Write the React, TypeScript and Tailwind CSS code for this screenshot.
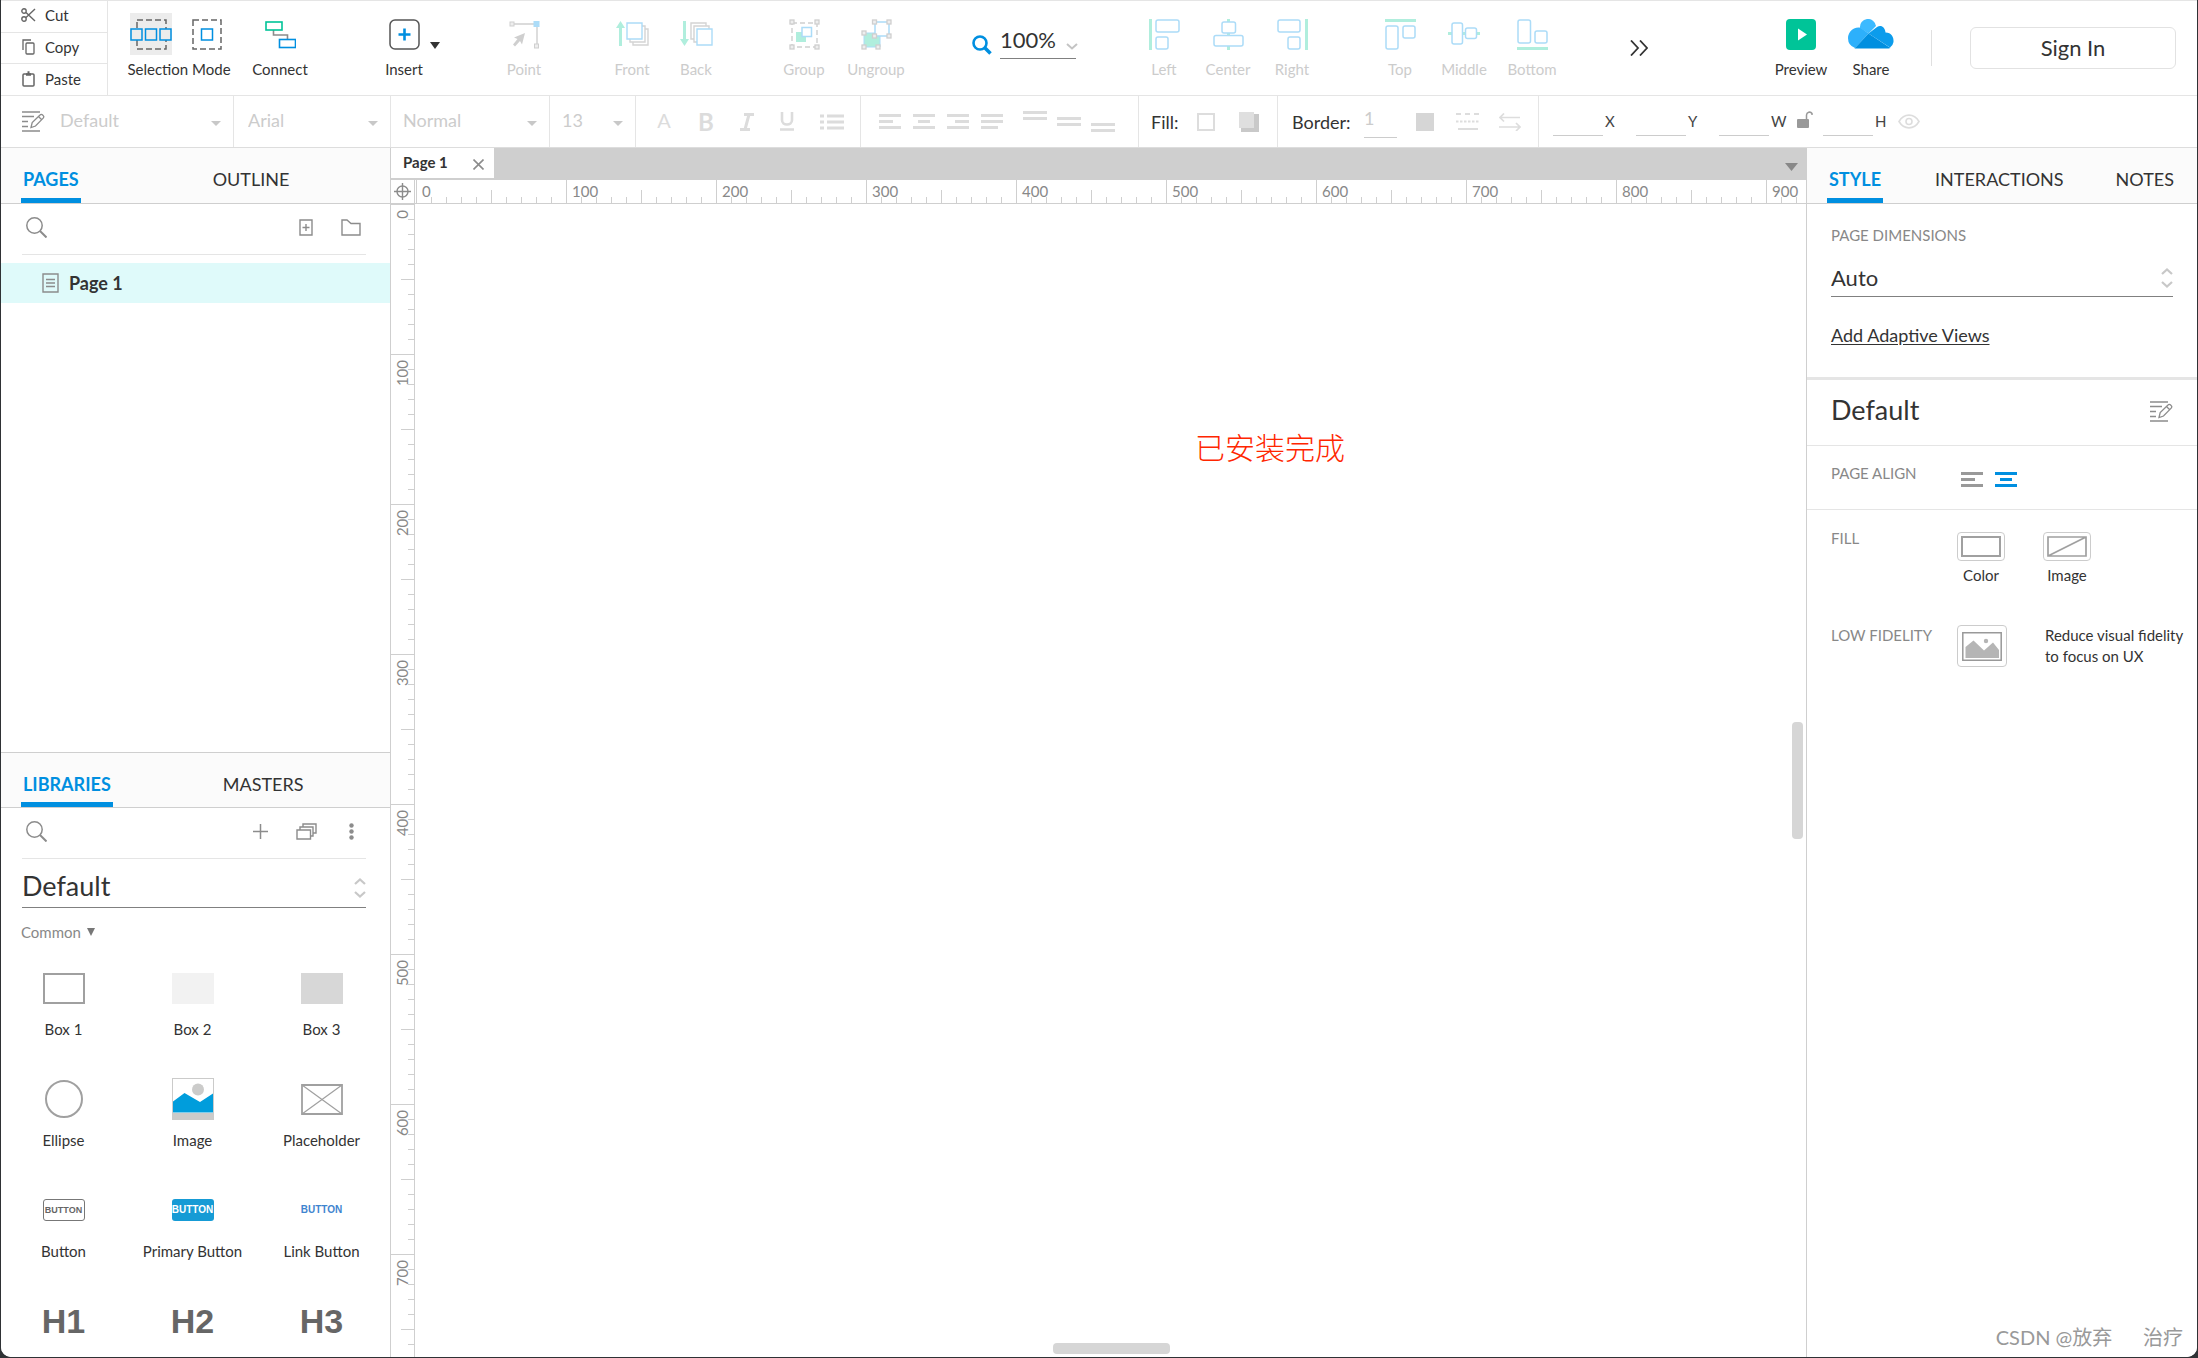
import type { ReactNode } from 'react'
import clsx from 'clsx'

const rulerX = [0, 100, 200, 300, 400, 500, 600, 700, 800, 900]
const rulerY = [0, 100, 200, 300, 400, 500, 600, 700]
const ticks = [1, 2, 3, 4, 5, 6, 7, 8, 9]

function Tool({
  label,
  children,
  disabled = false,
  wide = false,
}: {
  label: string
  children: ReactNode
  disabled?: boolean
  wide?: boolean
}) {
  return (
    <button
      disabled={disabled}
      className={clsx(
        'flex shrink-0 flex-col items-center pt-[18px] text-[15px] leading-5',
        wide ? 'w-[72px]' : 'w-16',
        disabled ? 'text-[#cccccc]' : 'text-[#333333]',
      )}
    >
      <span className="mb-2 flex h-8 items-start">{children}</span>
      {label}
    </button>
  )
}

function Caret({ className }: { className?: string }) {
  return (
    <svg width="10" height="5" viewBox="0 0 10 5" className={className} aria-hidden="true">
      <path d="M0 0h10L5 5z" fill="currentColor" />
    </svg>
  )
}

function UpDown() {
  return (
    <svg
      width="12"
      height="20"
      viewBox="0 0 12 20"
      fill="none"
      stroke="#c8c8c8"
      strokeWidth="2.200"
      className="pointer-events-none"
      aria-hidden="true"
    >
      <path d="M1 6l5-4.500L11 6M1 14l5 4.500L11 14" />
    </svg>
  )
}

function SearchIcon() {
  return (
    <svg width="21" height="21" viewBox="0 0 21 21" fill="none" stroke="#8c8c8c" strokeWidth="1.500" aria-hidden="true">
      <circle cx="8.500" cy="8.500" r="7.700" />
      <path d="M14 14l6.500 6.500" strokeWidth="2" />
    </svg>
  )
}

function StyleEditIcon() {
  return (
    <svg width="23" height="21" viewBox="0 0 23 21" fill="none" stroke="#8c8c8c" strokeWidth="1.300" aria-hidden="true">
      <path d="M0 1h18M0 5.500h12M0 10.500h6M0 15.500h6M0 20h18" />
      <path d="M9 16.500l1.200-5L18 4a1.800 1.800 0 0 1 2.600 0l.6.600a1.800 1.800 0 0 1 0 2.500L13.500 15zM16.500 5.500l3.200 3.200" />
    </svg>
  )
}

function HAlignIcon({ kind, className }: { kind: 'left' | 'center' | 'right' | 'justify'; className?: string }) {
  const mid = { left: 'M0 7.500h14', center: 'M5 7.500h12', right: 'M8 7.500h14', justify: 'M0 7.500h22' }[kind]
  const last = kind === 'justify' ? 'M0 13.500h17' : 'M0 13.500h22'
  return (
    <svg width="22" height="15" viewBox="0 0 22 15" stroke="currentColor" strokeWidth="3" className={className} aria-hidden="true">
      <path d="M0 1.500h22" />
      <path d={mid} />
      <path d={last} />
    </svg>
  )
}

function VAlignIcon() {
  return (
    <svg width="24" height="9" viewBox="0 0 24 9" stroke="currentColor" strokeWidth="3" aria-hidden="true">
      <path d="M0 1.500h24M0 7.500h24" />
    </svg>
  )
}

// corner handles shared by the group and ungroup drawings
function Handles({ points }: { points: [number, number][] }) {
  return (
    <>
      {points.map(([x, y]) => (
        <rect key={`${x}-${y}`} x={x} y={y} width="4" height="4" fill="#eeeeee" stroke="#cfcfcf" strokeWidth="1.300" />
      ))}
    </>
  )
}

function Tabs({ names, className }: { names: string[]; className: string }) {
  return (
    <div className={clsx('flex shrink-0 border-b border-[#cfcfcf] bg-[#fbfbfb] pl-5 text-[18px] leading-6', className)}>
      {names.map((name, i) => (
        <button
          key={name}
          className={clsx(
            'border-b-[5px] pt-3',
            i === 0 ? 'border-[#008fe0] px-0.5 font-bold text-[#008fe0]' : 'border-transparent text-[#333333]',
          )}
        >
          {name}
        </button>
      ))}
    </div>
  )
}

function ClipboardMenu() {
  const row = 'flex flex-1 items-center gap-[9px] pb-0.5 pl-5'
  return (
    <div className="flex w-[107px] shrink-0 flex-col divide-y divide-[#e5e5e5] border-r border-[#e5e5e5] text-[15px] leading-5 text-[#333333]">
      <button className={row}>
        <svg width="15" height="14" viewBox="0 0 15 14" fill="none" stroke="#666666" strokeWidth="1.400" aria-hidden="true">
          <circle cx="3" cy="3" r="2.200" />
          <circle cx="3" cy="11" r="2.200" />
          <path d="M5 4.500L14 13M5 9.500L14 1" />
        </svg>
        Cut
      </button>
      <button className={row}>
        <svg width="15" height="16" viewBox="0 0 15 16" fill="none" stroke="#666666" strokeWidth="1.300" aria-hidden="true">
          <path d="M2 11V1h8" />
          <rect x="5" y="4" width="8" height="11" rx="1" />
        </svg>
        Copy
      </button>
      <button className={row}>
        <svg width="15" height="16" viewBox="0 0 15 16" fill="none" stroke="#666666" strokeWidth="1.500" aria-hidden="true">
          <rect x="2" y="3" width="11" height="12" rx="1" />
          <path d="M5 3.500h5M6.500 1.500h2" strokeWidth="2.500" />
        </svg>
        Paste
      </button>
    </div>
  )
}

function MainToolbar() {
  return (
    <header className="flex h-24 shrink-0 border-y border-[#e5e5e5] bg-white">
      <ClipboardMenu />

      <div className="ml-5 flex w-[102px] shrink-0 flex-col items-center pt-3 text-[15px] leading-5 whitespace-nowrap text-[#333333]">
        <div className="mb-1 flex w-full justify-between pr-2 pl-0.5">
          <button aria-label="Select intersected" className="flex h-[42px] w-[42px] justify-center bg-[#ececec] pt-1.5">
            <svg width="42" height="31" viewBox="0 0 42 31" fill="none" aria-hidden="true">
              <rect x="7" y="1" width="29" height="29" stroke="#666666" strokeWidth="1.500" strokeDasharray="6 3" />
              <g fill="#ececec" stroke="#008fe0" strokeWidth="1.500">
                <rect x="1" y="10" width="11" height="11" />
                <rect x="15.500" y="10" width="11" height="11" />
                <rect x="30" y="10" width="11" height="11" />
              </g>
            </svg>
          </button>
          <button aria-label="Select contained" className="flex pt-1.5">
            <svg width="30" height="31" viewBox="0 0 30 31" fill="none" aria-hidden="true">
              <rect x="1" y="1" width="28" height="29" stroke="#666666" strokeWidth="1.500" strokeDasharray="6 3" />
              <rect x="9.500" y="10" width="11" height="11" stroke="#008fe0" strokeWidth="1.500" />
            </svg>
          </button>
        </div>
        Selection Mode
      </div>

      <div className="ml-3.5 flex shrink-0">
        <Tool label="Connect" wide>
          <svg width="31" height="30" viewBox="0 0 31 30" fill="none" strokeWidth="1.600" aria-hidden="true">
            <path d="M8.500 11v5h14v4" stroke="#8c8c8c" />
            <rect x="1" y="3" width="16" height="8" stroke="#00c498" />
            <rect x="14.500" y="20.500" width="16" height="8" stroke="#008fe0" />
          </svg>
        </Tool>
      </div>

      <div className="ml-14 flex shrink-0">
        <Tool label="Insert">
          <svg width="31" height="31" viewBox="0 0 31 31" fill="none" aria-hidden="true">
            <rect x="1" y="1" width="29" height="29" rx="5" stroke="#555555" strokeWidth="1.500" />
            <path d="M15.500 9.500v12M9.500 15.500h12" stroke="#008fe0" strokeWidth="2.600" />
          </svg>
        </Tool>
        <button aria-label="Insert menu" className="-ml-1.5 h-6 self-center pb-1.5">
          <svg width="10" height="7" viewBox="0 0 10 7" aria-hidden="true">
            <path d="M0 0h10L5 7z" fill="#333333" />
          </svg>
        </button>
      </div>

      <div className="ml-13 flex shrink-0">
        <Tool label="Point" disabled>
          <svg width="31" height="31" viewBox="0 0 31 31" fill="none" aria-hidden="true">
            <path d="M4 5h22M28 7v20" stroke="#cfcfcf" strokeWidth="1.400" />
            <rect x="1" y="3" width="4" height="4" fill="#eeeeee" stroke="#cfcfcf" />
            <rect x="25.500" y="25" width="4" height="4" fill="#eeeeee" stroke="#cfcfcf" />
            <rect x="24.500" y="2" width="6" height="6" fill="#acdcf8" />
            <path d="M16 14L5 18.500l3.500 1.500-4.500 5.500 2 2 5-5.500 2 3.500z" fill="#cfcfcf" />
          </svg>
        </Tool>
      </div>

      <div className="ml-11 flex shrink-0">
        <Tool label="Front" disabled>
          <svg width="33" height="28" viewBox="0 0 33 28" fill="#ffffff" aria-hidden="true">
            <path d="M4.500 27V5" stroke="#b0eedd" strokeWidth="3" />
            <path d="M0 9l4.500-7L9 9z" fill="#b0eedd" />
            <g strokeWidth="1.400">
              <path d="M17 10h15v16H17z" stroke="#d4d4d4" />
              <path d="M14 7h15v16H14z" stroke="#d4d4d4" />
              <path d="M11 4h15v16H11z" stroke="#acdcf8" />
            </g>
          </svg>
        </Tool>
        <Tool label="Back" disabled>
          <svg width="33" height="28" viewBox="0 0 33 28" fill="#ffffff" aria-hidden="true">
            <path d="M4.500 2v22" stroke="#b0eedd" strokeWidth="3" />
            <path d="M0 20l4.500 7L9 20z" fill="#b0eedd" />
            <g strokeWidth="1.400">
              <path d="M11 4h15v16H11z" stroke="#d4d4d4" />
              <path d="M14 7h15v16H14z" stroke="#d4d4d4" />
              <path d="M17 10h15v16H17z" stroke="#acdcf8" />
            </g>
          </svg>
        </Tool>
      </div>

      <div className="ml-10 flex shrink-0">
        <Tool label="Group" disabled wide>
          <svg width="31" height="31" viewBox="0 0 31 31" fill="none" aria-hidden="true">
            <rect x="3" y="4" width="25" height="24" stroke="#cfcfcf" strokeWidth="1.400" strokeDasharray="5 3" />
            <Handles points={[[1, 1], [26, 1], [1, 26], [26, 26]]} />
            <path d="M7 13h10v10H7z" fill="#b0eedd" />
            <path d="M13 8.500h9.500v9H13z" fill="#ffffff" stroke="#acdcf8" strokeWidth="1.500" />
          </svg>
        </Tool>
        <Tool label="Ungroup" disabled wide>
          <svg width="31" height="31" viewBox="0 0 31 31" fill="none" aria-hidden="true">
            <path d="M3 14h16v14H3z" fill="#b0eedd" stroke="#acdcf8" />
            <path d="M14 3h14v14H14z" fill="#ffffff" stroke="#acdcf8" strokeWidth="1.500" />
            <Handles points={[[11.5, 1], [26, 1], [26, 15], [1, 12], [1, 26], [15, 26], [11.5, 15]]} />
          </svg>
        </Tool>
      </div>

      <div className="ml-15 flex shrink-0 items-start gap-2 pt-[23px]">
        <svg width="20" height="20" viewBox="0 0 20 20" fill="none" stroke="#008fe0" className="mt-[11px]" aria-hidden="true">
          <circle cx="8" cy="8" r="6.500" strokeWidth="2.600" />
          <path d="M12.500 12.500l6 6" strokeWidth="3.500" />
        </svg>
        <div className="relative h-[35px] w-[76px] border-b border-[#808080]">
          <select aria-label="Zoom" className="w-full appearance-none text-[22px] leading-8 text-[#333333]">
            <option>100%</option>
          </select>
          <svg width="12" height="7" viewBox="0 0 12 7" fill="none" stroke="#c4c4c4" strokeWidth="2" className="pointer-events-none absolute -right-0.5 bottom-2" aria-hidden="true">
            <path d="M1 1l5 4.500L11 1" />
          </svg>
        </div>
      </div>

      <div className="ml-14 flex shrink-0">
        <Tool label="Left" disabled>
          <svg width="31" height="31" viewBox="0 0 31 31" fill="none" stroke="#acdcf8" strokeWidth="1.500" aria-hidden="true">
            <path d="M1.500 0v31" stroke="#b0eedd" strokeWidth="3" />
            <rect x="7" y="1" width="23" height="12" rx="2" />
            <rect x="7" y="18" width="12" height="12" rx="2" />
          </svg>
        </Tool>
        <Tool label="Center" disabled>
          <svg width="31" height="31" viewBox="0 0 31 31" fill="#ffffff" stroke="#acdcf8" strokeWidth="1.500" aria-hidden="true">
            <path d="M15.500 0v31" stroke="#b0eedd" strokeWidth="3" />
            <rect x="9" y="3" width="13.500" height="11" rx="2" />
            <rect x="1" y="16.500" width="29" height="10.500" rx="2" />
          </svg>
        </Tool>
        <Tool label="Right" disabled>
          <svg width="31" height="31" viewBox="0 0 31 31" fill="none" stroke="#acdcf8" strokeWidth="1.500" aria-hidden="true">
            <path d="M29.500 0v31" stroke="#b0eedd" strokeWidth="3" />
            <rect x="1" y="1" width="22" height="12" rx="2" />
            <rect x="11" y="18" width="12" height="12" rx="2" />
          </svg>
        </Tool>
      </div>

      <div className="ml-11 flex shrink-0">
        <Tool label="Top" disabled>
          <svg width="31" height="31" viewBox="0 0 31 31" fill="none" stroke="#acdcf8" strokeWidth="1.500" aria-hidden="true">
            <path d="M0 1.500h31" stroke="#b0eedd" strokeWidth="3" />
            <rect x="1" y="7" width="12" height="23" rx="2" />
            <rect x="18" y="7" width="12" height="12" rx="2" />
          </svg>
        </Tool>
        <Tool label="Middle" disabled>
          <svg width="32" height="31" viewBox="0 0 32 31" fill="#ffffff" stroke="#acdcf8" strokeWidth="1.500" aria-hidden="true">
            <path d="M0 14.500h32" stroke="#b0eedd" strokeWidth="3" />
            <rect x="4" y="4" width="10.500" height="21" rx="2" />
            <rect x="17.500" y="9" width="11" height="10.500" rx="2" />
          </svg>
        </Tool>
        <Tool label="Bottom" disabled wide>
          <svg width="31" height="31" viewBox="0 0 31 31" fill="none" stroke="#acdcf8" strokeWidth="1.500" aria-hidden="true">
            <path d="M0 29.500h31" stroke="#b0eedd" strokeWidth="3" />
            <rect x="1" y="1" width="12.500" height="23" rx="2" />
            <rect x="18" y="12" width="12" height="12" rx="2" />
          </svg>
        </Tool>
      </div>

      <button aria-label="More tools" className="ml-15.5 shrink-0">
        <svg width="18" height="16" viewBox="0 0 18 16" fill="none" stroke="#333333" strokeWidth="1.800" aria-hidden="true">
          <path d="M1 .5L8 8l-7 7.500M10 .5L17 8l-7 7.500" />
        </svg>
      </button>

      <div className="ml-auto flex shrink-0 items-start gap-0.5 pr-[21px]">
        <Tool label="Preview" wide>
          <svg width="30" height="31" viewBox="0 0 30 31" aria-hidden="true">
            <rect width="30" height="31" rx="4" fill="#00c498" />
            <path d="M12 9.500v12l9-6z" fill="#ffffff" />
          </svg>
        </Tool>
        <Tool label="Share">
          <svg width="46" height="30" viewBox="0 0 46 30" aria-hidden="true">
            <path d="M0 19a10.500 10.500 0 0 1 13-10.200l7.500 5.700L7 29A10.500 10.500 0 0 1 0 19z" fill="#2db0fb" />
            <path d="M12 9a8 8 0 0 1 16-2l-7.500 7.500z" fill="#3dbaff" />
            <path d="M20.500 14.500L29 8c4-2.500 8 0 8.500 5.500 6 0 8.500 5 8 9.500a8 8 0 0 1-3.500 5.500z" fill="#0c9cec" />
            <path d="M6.500 29.500l14-15 22 14.500-2 .5z" fill="#008fe0" />
          </svg>
        </Tool>
        <div className="mt-[29px] ml-6.5 h-9 w-px bg-[#e0e0e0]" />
        <button className="mt-[26px] ml-9 h-[42px] w-[206px] rounded-md border border-[#e2e2e2] text-[22px] leading-8 text-[#333333]">
          Sign In
        </button>
      </div>
    </header>
  )
}

function FormatSelect({ label, value, className }: { label: string; value: string; className: string }) {
  return (
    <div className={clsx('relative flex shrink-0 items-center border-r border-[#e5e5e5]', className)}>
      <select disabled aria-label={label} className="mb-1 w-full appearance-none text-[18px] leading-6 text-[#cccccc] opacity-100">
        <option>{value}</option>
      </select>
      <Caret className="pointer-events-none absolute right-3 bottom-[21px] text-[#c8c8c8]" />
    </div>
  )
}

function Coordinate({ name }: { name: string }) {
  return (
    <div className="flex items-end">
      <input id={`pos-${name}`} disabled className="mr-0.5 h-6 w-[50px] border-b border-[#cccccc]" />
      <label htmlFor={`pos-${name}`} className="-mt-px w-4 self-start text-[15px] leading-5 text-[#444444]">
        {name}
      </label>
    </div>
  )
}

function FormatBar() {
  const group = 'flex shrink-0 items-center border-r border-[#e5e5e5]'
  return (
    <div className="flex h-[52px] shrink-0 border-b border-[#dddddd] bg-white">
      <div className="flex w-[233px] shrink-0">
        <span className="flex items-center pr-[15px] pl-[21px]">
          <StyleEditIcon />
        </span>
        <FormatSelect label="Widget style" value="Default" className="flex-1" />
      </div>
      <FormatSelect label="Font" value="Arial" className="w-[157px] pl-3.5" />
      <FormatSelect label="Weight" value="Normal" className="w-[159px] pl-3" />
      <FormatSelect label="Font size" value="13" className="w-[86px] pl-3" />

      <div className={clsx(group, 'w-[225px] gap-6.5 pl-5 text-[#dcdcdc]')}>
        <button disabled aria-label="Text color" className="mb-1 w-4 text-[20px] leading-6">A</button>
        <button disabled aria-label="Bold" className="w-4 text-[24px] leading-6 font-bold">B</button>
        <button disabled aria-label="Italic">
          <svg width="14" height="18" viewBox="0 0 14 18" fill="none" stroke="currentColor" strokeWidth="3" aria-hidden="true">
            <path d="M4 1.500h10M0 16.500h10M9 1.500l-4 15" />
          </svg>
        </button>
        <button disabled aria-label="Underline">
          <svg width="14" height="19" viewBox="0 0 14 19" fill="none" stroke="currentColor" strokeWidth="2.600" aria-hidden="true">
            <path d="M2 0v8c0 6 10 6 10 0V0M0 17.500h14" />
          </svg>
        </button>
        <button disabled aria-label="Bullets">
          <svg width="24" height="16" viewBox="0 0 24 16" stroke="currentColor" strokeWidth="3" aria-hidden="true">
            <path d="M0 2h4M7 2h17M0 8h4M7 8h17M0 14h4M7 14h17" />
          </svg>
        </button>
      </div>

      <div className={clsx(group, 'w-[278px] gap-3 pl-[18px] text-[#dcdcdc]')}>
        <button disabled aria-label="Align left"><HAlignIcon kind="left" /></button>
        <button disabled aria-label="Align center"><HAlignIcon kind="center" /></button>
        <button disabled aria-label="Align right"><HAlignIcon kind="right" /></button>
        <button disabled aria-label="Justify"><HAlignIcon kind="justify" /></button>
        <button disabled aria-label="Align top" className="mb-3 ml-2"><VAlignIcon /></button>
        <button disabled aria-label="Align middle" className="-ml-0.5"><VAlignIcon /></button>
        <button disabled aria-label="Align bottom" className="mt-3 -ml-0.5"><VAlignIcon /></button>
      </div>

      <div className={clsx(group, 'w-[139px] pl-3 text-[18px] leading-6 text-[#333333]')}>
        <span className="w-[46px]">Fill:</span>
        <button disabled aria-label="Fill color" className="h-[18px] w-[18px] border-2 border-[#dddddd]" />
        <button disabled aria-label="Shadow" className="ml-6">
          <svg width="20" height="20" viewBox="0 0 20 20" aria-hidden="true">
            <path d="M2 2h18v18H2z" fill="#c9c9c9" />
            <path d="M0 0h15v16H0z" fill="#dfdfdf" />
          </svg>
        </button>
      </div>

      <div className={clsx(group, 'w-[261px] pl-3.5 text-[18px] leading-6 text-[#333333]')}>
        <label htmlFor="border-width" className="w-[72px]">Border:</label>
        <input id="border-width" disabled defaultValue="1" className="h-8 w-[33px] border-b border-[#cccccc] pb-1.5 text-[#cccccc]" />
        <button disabled aria-label="Border color" className="ml-[19px] h-[18px] w-[18px] bg-[#d6d6d6]" />
        <button disabled aria-label="Line style" className="ml-5.5">
          <svg width="23" height="17" viewBox="0 0 23 17" stroke="#dddddd" strokeWidth="2" aria-hidden="true">
            <path d="M0 1h23" strokeDasharray="5 4" />
            <path d="M0 8.500h23" strokeDasharray="2.500 1.500" />
            <path d="M2 16h20" />
          </svg>
        </button>
        <button disabled aria-label="Arrow style" className="ml-5">
          <svg width="22" height="18" viewBox="0 0 22 18" fill="none" stroke="#dddddd" strokeWidth="1.700" aria-hidden="true">
            <path d="M21 4.500H1M5 .5l-4 4 4 4M0 14h21M17 10l4 4-4 4" />
          </svg>
        </button>
      </div>

      <div className="flex items-center gap-[15px] pt-1 pl-3.5">
        <Coordinate name="X" />
        <Coordinate name="Y" />
        <div className="flex items-center">
          <Coordinate name="W" />
          <button disabled aria-label="Keep proportions" className="mr-2.5 mb-2 ml-2.5">
            <svg width="16" height="18" viewBox="0 0 16 18" fill="none" aria-hidden="true">
              <rect x="0" y="8" width="12" height="9" rx="1" fill="#999999" />
              <path d="M9.500 8V4a3 3 0 0 1 5.500-1.500V4" stroke="#999999" strokeWidth="1.500" />
            </svg>
          </button>
          <Coordinate name="H" />
        </div>
        <button disabled aria-label="Visibility" className="-ml-2 mb-1">
          <svg width="22" height="15" viewBox="0 0 22 15" fill="none" stroke="#dddddd" strokeWidth="1.600" aria-hidden="true">
            <path d="M1 7.500C6-1 16-1 21 7.500 16 16 6 16 1 7.500z" />
            <circle cx="11" cy="7.500" r="3" />
          </svg>
        </button>
      </div>
    </div>
  )
}

function PagesPanel() {
  return (
    <section className="flex min-h-0 flex-1 basis-0 flex-col">
      <Tabs names={['PAGES', 'OUTLINE']} className="h-14 gap-[132px]" />
      <div className="mr-6 ml-[21px] flex h-[51px] shrink-0 items-center border-b border-[#e5e5e5] pr-[5px] pb-1 pl-1">
        <button aria-label="Search pages">
          <SearchIcon />
        </button>
        <button aria-label="Add page" className="mr-7 ml-auto">
          <svg width="14" height="17" viewBox="0 0 14 17" fill="none" stroke="#8c8c8c" strokeWidth="1.400" aria-hidden="true">
            <path d="M1 1h12v15H1zM7 5v7M3.500 8.500h7" />
          </svg>
        </button>
        <button aria-label="Add folder">
          <svg width="20" height="17" viewBox="0 0 20 17" fill="none" stroke="#8c8c8c" strokeWidth="1.400" aria-hidden="true">
            <path d="M1 1h5l4 3.500h9V16H1z" />
          </svg>
        </button>
      </div>
      <button className="mt-2 flex h-10 shrink-0 items-center gap-2.5 bg-[#dffafa] pl-[41px] text-[18px] leading-6 font-bold text-[#333333]">
        <svg width="17" height="20" viewBox="0 0 17 20" fill="none" stroke="#8c8c8c" strokeWidth="1.400" aria-hidden="true">
          <path d="M1 1h15v18H1zM4 6.500h9M4 10h9M4 13.500h9" />
        </svg>
        Page 1
      </button>
    </section>
  )
}

const widgets: { name: string; icon: ReactNode }[] = [
  { name: 'Box 1', icon: <span className="h-[31px] w-[42px] border-2 border-[#a0a0a0] bg-white" /> },
  { name: 'Box 2', icon: <span className="h-[31px] w-[42px] bg-[#f2f2f2]" /> },
  { name: 'Box 3', icon: <span className="h-[31px] w-[42px] bg-[#d7d7d7]" /> },
  { name: 'Ellipse', icon: <span className="h-[38px] w-[38px] rounded-full border-2 border-[#a0a0a0]" /> },
  {
    name: 'Image',
    icon: (
      <svg width="42" height="42" viewBox="0 0 42 42" aria-hidden="true">
        <path d="M0 0h42v42H0z" fill="#cbcbca" />
        <path d="M1 1h40v34H1z" fill="#ffffff" />
        <circle cx="26" cy="11.500" r="6" fill="#cbcbca" />
        <path d="M1 23.500L12.500 15 28 24l13-8.500V34.500H1z" fill="#009ddc" />
      </svg>
    ),
  },
  {
    name: 'Placeholder',
    icon: (
      <svg width="42" height="31" viewBox="0 0 42 31" fill="none" stroke="#a0a0a0" aria-hidden="true">
        <path d="M1 1h40v29H1z" strokeWidth="1.800" />
        <path d="M1 1l40 29M41 1L1 30" strokeWidth="1.200" />
      </svg>
    ),
  },
  {
    name: 'Button',
    icon: (
      <span className="flex h-[22px] w-[42px] items-center justify-center rounded-[3px] border border-[#777777] font-['Liberation_Sans',Arial,sans-serif] text-[9px] leading-none font-bold text-[#666666]">
        BUTTON
      </span>
    ),
  },
  {
    name: 'Primary Button',
    icon: (
      <span className="flex h-[22px] w-[42px] items-center justify-center rounded-[3px] bg-[#169bd5] font-['Liberation_Sans',Arial,sans-serif] text-[10px] leading-none font-bold text-white">
        BUTTON
      </span>
    ),
  },
  {
    name: 'Link Button',
    icon: (
      <span className="font-['Liberation_Sans',Arial,sans-serif] text-[10px] leading-none font-bold text-[#3f85cf]">
        BUTTON
      </span>
    ),
  },
]

function LibrariesPanel() {
  return (
    <section className="flex min-h-0 flex-1 basis-0 flex-col overflow-hidden border-t border-[#cfcfcf]">
      <Tabs names={['LIBRARIES', 'MASTERS']} className="h-[55px] gap-[110px]" />
      <div className="mr-6 ml-[21px] flex h-[51px] shrink-0 items-center border-b border-[#e5e5e5] pr-3 pb-1 pl-1">
        <button aria-label="Search libraries">
          <SearchIcon />
        </button>
        <button aria-label="Add library" className="mr-7 ml-auto">
          <svg width="15" height="15" viewBox="0 0 15 15" stroke="#8c8c8c" strokeWidth="1.500" aria-hidden="true">
            <path d="M7.500 0v15M0 7.500h15" />
          </svg>
        </button>
        <button aria-label="Manage libraries" className="mr-8">
          <svg width="21" height="17" viewBox="0 0 21 17" fill="#ffffff" stroke="#8c8c8c" strokeWidth="1.400" aria-hidden="true">
            <path d="M7 1h13v9H7z" />
            <path d="M4 4h13v9H4z" />
            <path d="M1 7h13.500v9H1z" />
          </svg>
        </button>
        <button aria-label="More">
          <svg width="5" height="17" viewBox="0 0 5 17" fill="#8c8c8c" aria-hidden="true">
            <circle cx="2.500" cy="2.500" r="2.200" />
            <circle cx="2.500" cy="8.500" r="2.200" />
            <circle cx="2.500" cy="14.500" r="2.200" />
          </svg>
        </button>
      </div>
      <div className="mr-6 ml-[21px] flex h-[49px] shrink-0 items-center border-b border-[#808080]">
        <select aria-label="Library" className="flex-1 appearance-none pt-1.5 text-[27px] leading-9 text-[#333333]">
          <option>Default</option>
        </select>
        <span className="-ml-3 pt-2.5">
          <UpDown />
        </span>
      </div>
      <button className="mt-3.5 flex shrink-0 items-center gap-1.5 pl-5 text-[15px] leading-5 text-[#888888]">
        Common
        <svg width="8" height="8" viewBox="0 0 8 8" fill="#777777" aria-hidden="true">
          <path d="M0 0h8L4 8z" />
        </svg>
      </button>
      <ul className="mt-[15px] -ml-0.5 grid w-[387px] shrink-0 grid-cols-3 text-[15px] leading-5 text-[#333333]">
        {widgets.map((widget) => (
          <li key={widget.name} className="flex h-[111px] flex-col items-center">
            <span className="flex h-[62px] items-center">{widget.icon}</span>
            {widget.name}
          </li>
        ))}
        {['H1', 'H2', 'H3'].map((heading) => (
          <li
            key={heading}
            className="flex h-[62px] items-center justify-center font-['Liberation_Sans',Arial,sans-serif] text-[34px] leading-10 font-bold text-[#666666]"
          >
            {heading}
          </li>
        ))}
      </ul>
    </section>
  )
}

function HorizontalRuler() {
  return (
    <div className="flex min-w-0 flex-1 overflow-hidden">
      {rulerX.map((value) => (
        <div key={value} className="relative flex w-[150px] shrink-0 items-end border-l border-[#cfcfcf] pl-[14px]">
          {ticks.map((tick) => (
            <span key={tick} className={clsx('w-[15px] shrink-0 border-l border-[#cfcfcf]', tick === 5 ? 'h-[13px]' : 'h-1.5')} />
          ))}
          <span className="absolute top-px left-[5px] text-[15px] leading-5 text-[#888888]">{value}</span>
        </div>
      ))}
    </div>
  )
}

function VerticalRuler() {
  return (
    <div className="flex w-6 shrink-0 flex-col overflow-hidden border-r border-[#cfcfcf]">
      {rulerY.map((value) => (
        <div key={value} className="relative flex h-[150px] shrink-0 flex-col items-end border-t border-[#cfcfcf] pt-[14px]">
          {ticks.map((tick) => (
            <span key={tick} className={clsx('h-[15px] shrink-0 border-t border-[#cfcfcf]', tick === 5 ? 'w-[13px]' : 'w-1.5')} />
          ))}
          <span className="absolute top-[5px] left-px rotate-180 text-[15px] leading-5 text-[#888888] [writing-mode:vertical-rl]">
            {value}
          </span>
        </div>
      ))}
    </div>
  )
}

function Canvas() {
  return (
    <main className="flex min-w-0 flex-1 flex-col bg-white">
      <div className="flex h-8 shrink-0 items-start bg-[#cfcfcf]">
        <div className="flex h-[30px] w-[103px] items-center justify-between bg-white pr-2.5 pb-0.5 pl-3 text-[15px] leading-5 font-bold text-[#333333]">
          Page 1
          <button aria-label="Close Page 1" className="mt-1">
            <svg width="11" height="11" viewBox="0 0 11 11" stroke="#8c8c8c" strokeWidth="1.600" aria-hidden="true">
              <path d="M.5.5l10 10M10.500.5l-10 10" />
            </svg>
          </button>
        </div>
        <button aria-label="Open pages" className="mt-[15px] mr-2 ml-auto">
          <svg width="13" height="8" viewBox="0 0 13 8" aria-hidden="true">
            <path d="M0 0h13L6.500 8z" fill="#888888" />
          </svg>
        </button>
      </div>
      <div className="flex h-6 shrink-0 border-b border-[#cfcfcf]">
        <div className="mr-px flex w-6 shrink-0 items-center justify-center border-r border-[#cfcfcf]">
          <svg width="17" height="17" viewBox="0 0 17 17" fill="none" stroke="#8c8c8c" strokeWidth="1.400" aria-hidden="true">
            <circle cx="8.500" cy="8.500" r="5.500" />
            <path d="M8.500 0v17M0 8.500h17" />
          </svg>
        </div>
        <HorizontalRuler />
      </div>
      <div className="flex min-h-0 flex-1">
        <VerticalRuler />
        <div className="relative flex-1">
          <p className="absolute top-[223px] left-[780px] text-[30px] leading-10 font-light whitespace-nowrap text-[#ff2600]">已安装完成</p>
          <div className="absolute top-[518px] right-[3px] h-[117px] w-[11px] rounded bg-[#d6d6d6]" />
          <div className="absolute bottom-[3px] left-[638px] h-[11px] w-[117px] rounded bg-[#d6d6d6]" />
        </div>
      </div>
    </main>
  )
}

function StylePanel() {
  const caption = 'w-[130px] shrink-0 text-[15px] leading-5 text-[#888888]'
  return (
    <aside className="flex w-[391px] shrink-0 flex-col border-l border-[#cfcfcf] bg-white text-[#333333]">
      <Tabs names={['STYLE', 'INTERACTIONS', 'NOTES']} className="h-14 gap-[52px]" />

      <div className="h-[173px] shrink-0 px-6 pt-[21px]">
        <label htmlFor="page-dimensions" className="block text-[15px] leading-5 text-[#888888]">
          PAGE DIMENSIONS
        </label>
        <div className="mt-4 flex items-center border-b border-[#808080] pt-px pb-0.5">
          <select id="page-dimensions" className="flex-1 appearance-none text-[22px] leading-8">
            <option>Auto</option>
          </select>
          <span className="-ml-3">
            <UpDown />
          </span>
        </div>
        <a href="#adaptive-views" className="mt-[26px] block text-[18px] leading-6 underline underline-offset-2">
          Add Adaptive Views
        </a>
      </div>

      <div className="flex h-[69px] shrink-0 items-center justify-between border-t-[3px] border-b border-[#e5e5e5] px-6 pb-0.5">
        <h2 className="pb-1 text-[27px] leading-9">Default</h2>
        <button aria-label="Edit style">
          <StyleEditIcon />
        </button>
      </div>

      <div className="flex h-16 shrink-0 items-start border-b border-[#e5e5e5] pt-[17px] pl-6">
        <span className={caption}>PAGE ALIGN</span>
        <button aria-label="Align page left" className="mt-[9px] text-[#999999]">
          <HAlignIcon kind="left" />
        </button>
        <button aria-label="Align page center" className="mt-[9px] ml-3 text-[#008fe0]">
          <HAlignIcon kind="center" />
        </button>
      </div>

      <div className="flex shrink-0 items-start pt-[18px] pl-6 text-[15px] leading-5">
        <span className="w-[126px] shrink-0 text-[#888888]">FILL</span>
        <button className="mt-1 flex w-12 flex-col items-center">
          <span className="mb-1 flex h-[29px] w-12 rounded border border-[#cccccc] p-[3px]">
            <span className="flex-1 border-2 border-[#a0a0a0]" />
          </span>
          Color
        </button>
        <button className="mt-1 ml-[38px] flex w-12 flex-col items-center">
          <span className="mb-1 flex h-[29px] w-12 rounded border border-[#cccccc] p-[3px]">
            <svg width="40" height="21" viewBox="0 0 40 21" fill="none" stroke="#a0a0a0" strokeWidth="1.700" aria-hidden="true">
              <path d="M1 1h38v19H1zM1 20L39 1" />
            </svg>
          </span>
          Image
        </button>
      </div>

      <div className="mt-10 flex shrink-0 items-start pl-6 text-[15px] leading-[21px]">
        <span className="w-[126px] shrink-0 text-[#888888]">LOW FIDELITY</span>
        <button aria-label="Low fidelity" className="flex h-[42px] w-[50px] shrink-0 items-center justify-center rounded border border-[#cccccc]">
          <svg width="40" height="29" viewBox="0 0 40 29" fill="none" aria-hidden="true">
            <path d="M.8.8h38.400v27.400H.8z" stroke="#999999" strokeWidth="1.500" />
            <path d="M3.500 15l8-6.500L22 18.500l9-8 6 7.500v8H3.500z" fill="#b5b5b5" />
            <circle cx="24" cy="9" r="2.200" fill="#b5b5b5" />
          </svg>
        </button>
        <p className="ml-[38px] whitespace-nowrap">
          Reduce visual fidelity
          <br />
          to focus on UX
        </p>
      </div>

      <p className="mt-auto mb-2 self-end pr-3.5 text-[20px] leading-6 whitespace-pre text-[#999999]">CSDN @放弃      治疗</p>
    </aside>
  )
}

export default function App() {
  return (
    <div className="h-screen overflow-hidden bg-[#2f3235] px-px pb-px font-[Lato,'Noto_Sans_CJK_SC',sans-serif]">
      <div className="flex h-full flex-col overflow-hidden rounded-b-[10px] bg-white">
        <MainToolbar />
        <FormatBar />
        <div className="flex min-h-0 flex-1">
          <aside className="flex w-[390px] shrink-0 flex-col border-r border-[#cfcfcf] bg-white">
            <PagesPanel />
            <LibrariesPanel />
          </aside>
          <Canvas />
          <StylePanel />
        </div>
      </div>
    </div>
  )
}
